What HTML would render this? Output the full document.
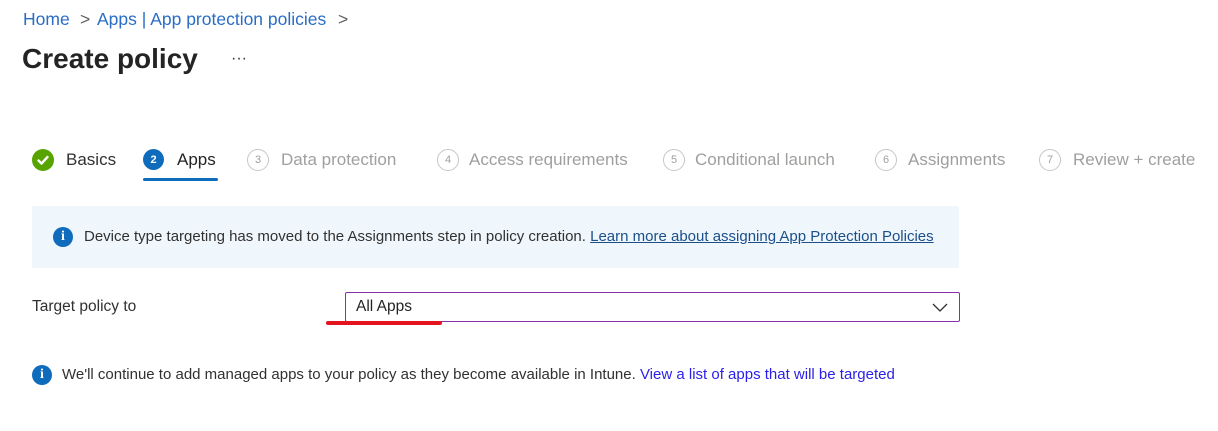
<!DOCTYPE html>
<html><head><meta charset="utf-8"><style>
*{margin:0;padding:0;box-sizing:border-box}
body{width:1218px;height:431px;background:#fff;font-family:"Liberation Sans",sans-serif;position:relative;overflow:hidden;color:#323130}
.a{position:absolute;white-space:nowrap}
.bc{top:9px;font-size:17.5px;color:#2a6dc4}
.step{top:150px;font-size:17px;color:#a19f9d}
.num{position:absolute;top:149px;width:22px;height:22px;border:1.5px solid #c8c6c4;border-radius:50%;font-size:11px;color:#a19f9d;display:flex;align-items:center;justify-content:center}
.info{position:absolute;width:20px;height:20px;border-radius:50%;background:#0f6cbd;color:#fff;font:bold 14px "Liberation Serif",serif;display:flex;align-items:center;justify-content:center}
</style></head><body>
<div class="a bc" style="left:23px">Home</div>
<div class="a bc" style="left:80px;color:#605e5c">&gt;</div>
<div class="a bc" style="left:97px">Apps | App protection policies</div>
<div class="a bc" style="left:338px;color:#605e5c">&gt;</div>
<div class="a" style="left:22px;top:43px;font-size:28px;font-weight:bold;color:#242424">Create policy</div>
<div class="a" style="left:231px;top:50px;font-size:16px;color:#323130">···</div>

<div class="a" style="left:32px;top:149px;width:22px;height:22px;border-radius:50%;background:#57a300">
<svg width="22" height="22" viewBox="0 0 22 22"><path d="M6.5 11.5l3 3 6-6.5" stroke="#fff" stroke-width="2.4" fill="none" stroke-linecap="round" stroke-linejoin="round"/></svg></div>
<div class="a step" style="left:66px;color:#323130">Basics</div>
<div class="a" style="left:143px;top:149px;width:21px;height:21px;border-radius:50%;background:#0f6cbd;color:#fff;font-size:11px;font-weight:bold;display:flex;align-items:center;justify-content:center">2</div>
<div class="a step" style="left:177px;color:#242424">Apps</div>
<div class="a" style="left:143px;top:178px;width:75px;height:3px;background:#0f6cbd;border-radius:2px"></div>
<div class="num" style="left:247px">3</div><div class="a step" style="left:281px">Data protection</div>
<div class="num" style="left:437px">4</div><div class="a step" style="left:469px">Access requirements</div>
<div class="num" style="left:663px">5</div><div class="a step" style="left:695px">Conditional launch</div>
<div class="num" style="left:875px">6</div><div class="a step" style="left:908px">Assignments</div>
<div class="num" style="left:1039px">7</div><div class="a step" style="left:1073px">Review + create</div>

<div class="a" style="left:32px;top:206px;width:927px;height:62px;background:#eff6fc;border-radius:2px"></div>
<div class="info" style="left:53px;top:227px">i</div>
<div class="a" style="left:84px;top:228px;font-size:15px;color:#323130">Device type targeting has moved to the Assignments step in policy creation. <span style="color:#1b4f8a;text-decoration:underline">Learn more about assigning App Protection Policies</span></div>

<div class="a" style="left:32px;top:298px;font-size:15.5px">Target policy to</div>
<div class="a" style="left:345px;top:292px;width:615px;height:30px;border:1px solid #8b2fa8;border-radius:2px"></div>
<div class="a" style="left:356px;top:298px;font-size:15.5px;color:#242424">All Apps</div>
<svg class="a" style="left:931px;top:301px" width="18" height="12" viewBox="0 0 18 12"><path d="M2 3l7 7 7-7" stroke="#323130" stroke-width="1.3" fill="none"/></svg>
<div class="a" style="left:326px;top:321px;width:116px;height:4px;background:#e3141f;border-radius:2px"></div>

<div class="info" style="left:32px;top:365px">i</div>
<div class="a" style="left:62px;top:366px;font-size:15px">We'll continue to add managed apps to your policy as they become available in Intune. <span style="color:#2a1ee8">View a list of apps that will be targeted</span></div>
</body></html>
